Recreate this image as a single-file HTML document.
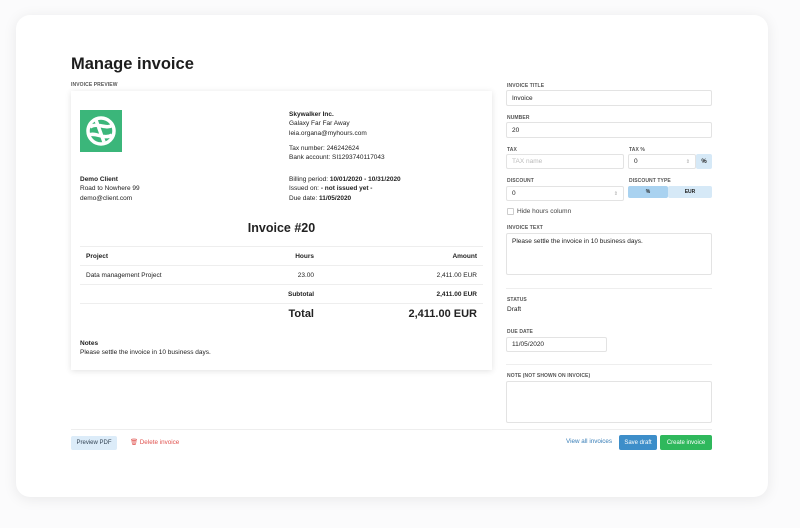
<!DOCTYPE html>
<html><head><meta charset="utf-8"><style>
*{box-sizing:border-box;margin:0;padding:0}
body{width:800px;height:528px;background:#fbfbfc;font-family:"Liberation Sans",sans-serif;color:#222;position:relative;overflow:hidden}
.card{position:absolute;left:16px;top:15px;width:752px;height:482px;background:#fff;border-radius:14px;box-shadow:0 2px 14px rgba(0,0,0,.08)}
.a{position:absolute;white-space:nowrap}
.lbl{font-size:5px;font-weight:bold;color:#555;letter-spacing:.1px}
.t{font-size:6.5px;color:#222;line-height:9.3px}
.in{position:absolute;border:1px solid #e3e3e3;border-radius:2px;background:#fff;font-size:6.5px;padding:0 5px;display:flex;align-items:center}
.hr{position:absolute;height:1px;background:#eee}
.btn{position:absolute;font-size:6px;display:flex;align-items:center;justify-content:center;border-radius:2px}
</style></head><body>
<div class="card"></div>
<div class="a" style="left:71px;top:55px;font-size:16.5px;font-weight:bold;color:#1d1d1d">Manage invoice</div>
<div class="a lbl" style="left:71px;top:82px">INVOICE PREVIEW</div>
<div class="a" style="left:71px;top:91px;width:421px;height:279px;background:#fff;box-shadow:0 1px 6px rgba(0,0,0,.12)"></div>
<div class="a" style="left:80px;top:110px;width:42px;height:42px;background:#3bb67a">
<svg width="42" height="42" viewBox="0 0 42 42"><circle cx="21" cy="21" r="13" fill="none" stroke="#fff" stroke-width="3.5"/><path d="M10 17 C18 12 26 20 33 15 M9 25 C16 22 24 30 32 25 M16 10 L24 32" fill="none" stroke="#fff" stroke-width="3.5"/></svg></div>
<div class="a t" style="left:289px;top:110px"><b>Skywalker Inc.</b><br>Galaxy Far Far Away<br>leia.organa@myhours.com</div>
<div class="a t" style="left:289px;top:144px">Tax number: 246242624<br>Bank account: SI1293740117043</div>
<div class="a t" style="left:80px;top:175px"><b>Demo Client</b><br>Road to Nowhere 99<br>demo@client.com</div>
<div class="a t" style="left:289px;top:175px">Billing period: <b>10/01/2020 - 10/31/2020</b><br>Issued on: <b>- not issued yet -</b><br>Due date: <b>11/05/2020</b></div>
<div class="a" style="left:71px;width:421px;top:221px;text-align:center;font-size:12.5px;font-weight:bold">Invoice #20</div>
<div class="hr" style="left:80px;width:403px;top:246px"></div>
<div class="a t" style="left:86px;top:252px;font-weight:bold">Project</div>
<div class="a t" style="left:260px;width:54px;text-align:right;top:252px;font-weight:bold">Hours</div>
<div class="a t" style="left:380px;width:97px;text-align:right;top:252px;font-weight:bold">Amount</div>
<div class="hr" style="left:80px;width:403px;top:265px"></div>
<div class="a t" style="left:86px;top:271px">Data management Project</div>
<div class="a t" style="left:260px;width:54px;text-align:right;top:271px">23.00</div>
<div class="a t" style="left:380px;width:97px;text-align:right;top:271px">2,411.00 EUR</div>
<div class="hr" style="left:80px;width:403px;top:284px"></div>
<div class="a t" style="left:260px;width:54px;text-align:right;top:290px;font-weight:bold">Subtotal</div>
<div class="a t" style="left:380px;width:97px;text-align:right;top:290px;font-weight:bold">2,411.00 EUR</div>
<div class="hr" style="left:80px;width:403px;top:303px"></div>
<div class="a" style="left:240px;width:74px;text-align:right;top:308px;font-size:11px;font-weight:bold">Total</div>
<div class="a" style="left:360px;width:117px;text-align:right;top:308px;font-size:11px;font-weight:bold">2,411.00 EUR</div>
<div class="a t" style="left:80px;top:339px"><b>Notes</b><br>Please settle the invoice in 10 business days.</div>

<div class="a lbl" style="left:507px;top:83px">INVOICE TITLE</div>
<div class="in" style="left:506px;top:90px;width:206px;height:16px">Invoice</div>
<div class="a lbl" style="left:507px;top:115px">NUMBER</div>
<div class="in" style="left:506px;top:122px;width:206px;height:16px">20</div>
<div class="a lbl" style="left:507px;top:147px">TAX</div>
<div class="in" style="left:506px;top:154px;width:118px;height:15px;color:#bbb">TAX name</div>
<div class="a lbl" style="left:629px;top:147px">TAX %</div>
<div class="in" style="left:628px;top:154px;width:68px;height:15px">0<span style="margin-left:auto;color:#aaa;font-size:5px">⇕</span></div>
<div class="btn" style="left:696px;top:154px;width:16px;height:15px;background:#d6e9f7;font-weight:bold">%</div>
<div class="a lbl" style="left:507px;top:178px">DISCOUNT</div>
<div class="in" style="left:506px;top:186px;width:118px;height:15px">0<span style="margin-left:auto;color:#aaa;font-size:5px">⇕</span></div>
<div class="a lbl" style="left:629px;top:178px">DISCOUNT TYPE</div>
<div class="btn" style="left:628px;top:186px;width:40px;height:12px;background:#a9d2f0;font-weight:bold;font-size:5px">%</div>
<div class="btn" style="left:668px;top:186px;width:44px;height:12px;background:#d6e9f7;font-weight:bold;font-size:5px">EUR</div>
<div class="a" style="left:507px;top:208px;width:7px;height:7px;border:1px solid #ccc;border-radius:1px"></div>
<div class="a t" style="left:517px;top:207px;color:#444">Hide hours column</div>
<div class="a lbl" style="left:507px;top:225px">INVOICE TEXT</div>
<div class="in" style="left:506px;top:233px;width:206px;height:42px;align-items:flex-start;padding-top:4px">Please settle the invoice in 10 business days.</div>
<div class="hr" style="left:506px;width:206px;top:288px"></div>
<div class="a lbl" style="left:507px;top:297px">STATUS</div>
<div class="a t" style="left:507px;top:305px">Draft</div>
<div class="a lbl" style="left:507px;top:329px">DUE DATE</div>
<div class="in" style="left:506px;top:337px;width:101px;height:15px">11/05/2020</div>
<div class="hr" style="left:506px;width:206px;top:364px"></div>
<div class="a lbl" style="left:507px;top:373px">NOTE (NOT SHOWN ON INVOICE)</div>
<div class="in" style="left:506px;top:381px;width:206px;height:42px"></div>

<div class="hr" style="left:71px;width:641px;top:429px"></div>
<div class="btn" style="left:71px;top:436px;width:46px;height:14px;background:#dcecf9;color:#345">Preview PDF</div>
<div class="a" style="left:130px;top:438px;font-size:6.3px;color:#e0534f">🗑 Delete invoice</div>
<div class="a" style="left:566px;top:438px;font-size:6.3px;color:#3a7fb8">View all invoices</div>
<div class="btn" style="left:619px;top:435px;width:38px;height:15px;background:#3d8ec9;color:#fff">Save draft</div>
<div class="btn" style="left:660px;top:435px;width:52px;height:15px;background:#2fb85c;color:#fff">Create invoice</div>
</body></html>
